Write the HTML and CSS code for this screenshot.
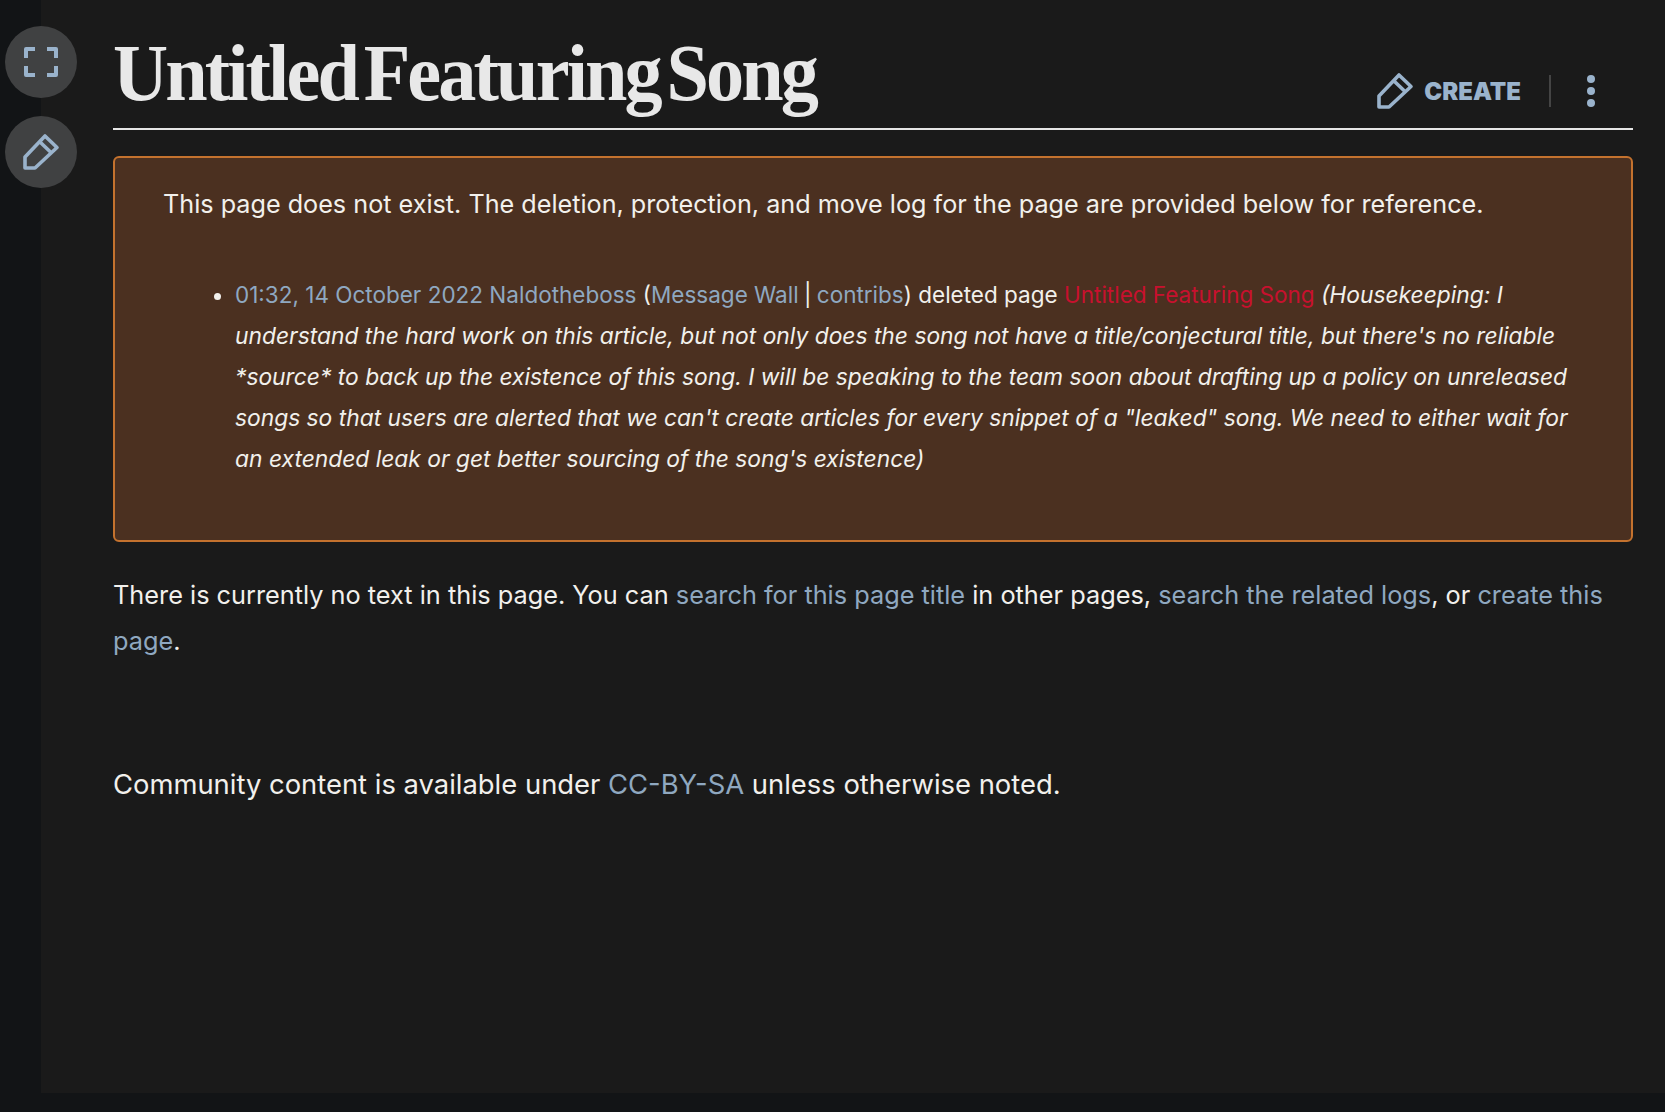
FILE: index.html
```html
<!DOCTYPE html>
<html lang="en">
<head>
    <meta charset="UTF-8" />
    <title>Untitled Featuring Song</title>
    <link rel="stylesheet" href="styles.css">
</head>
<body>

<div class="page">

    <!-- Left rail -->
    <div class="rail">
        <button class="rail-btn" type="button">
            <svg width="34" height="30" viewBox="0 0 34 30" fill="none" stroke="#9ab3cc" stroke-width="4" stroke-linejoin="round">
                <path d="M2 11V2H11M23 2H32V11M32 19V28H23M11 28H2V19"/>
            </svg>
        </button>
        <button class="rail-btn" type="button">
            <svg width="38" height="38" viewBox="0 0 38 38" fill="none" stroke="#9ab3cc" stroke-width="3.6" stroke-linejoin="round">
                <path d="M23 3L35 14.5L13 35H3V24Z M17.5 8.5L29.5 20"/>
            </svg>
        </button>
    </div>

    <!-- Main content -->
    <div class="content">
        <div class="page-header">
            <h1>Untitled Featuring Song</h1>
            <div class="page-actions">
                <a class="create-link" href="#">
                    <svg width="38" height="38" viewBox="0 0 38 38" fill="none" stroke="#9ab3cc" stroke-width="3.6" stroke-linejoin="round">
                        <path d="M23 3L35 14.5L13 35H3V24Z M17.5 8.5L29.5 20"/>
                    </svg>
                    <span>CREATE</span>
                </a>
                <span class="divider"></span>
                <span class="more">
                    <i></i><i></i><i></i>
                </span>
            </div>
        </div>

        <div class="notice">
            <p class="notice-text">This page does not exist. The deletion, protection, and move log for the page are provided below for reference.</p>
            <ul class="log">
                <li><span class="log-head"><a href="#">01:32, 14 October 2022</a> <a href="#">Naldotheboss</a> (<a href="#">Message Wall</a> <span class="sep">|</span> <a href="#">contribs</a>) deleted page <a class="missing" href="#">Untitled Featuring Song</a></span> <em>(Housekeeping: I understand the hard work on this article, but not only does the song not have a title/conjectural title, but there's no reliable *source* to back up the existence of this song. I will be speaking to the team soon about drafting up a policy on unreleased songs so that users are alerted that we can't create articles for every snippet of a "leaked" song. We need to either wait for an extended leak or get better sourcing of the song's existence)</em></li>
            </ul>
        </div>

        <p class="no-text">There is currently no text in this page. You can <a href="#">search for this page title</a> in other pages, <a href="#">search the related logs</a>, or <a href="#">create this page</a>.</p>

        <p class="license">Community content is available under <a href="#">CC-BY-SA</a> unless otherwise noted.</p>
    </div>

</div>

</body>
</html>
```

FILE: styles.css
```css
* {
    box-sizing: border-box;
    margin: 0;
    padding: 0;
}

body {
    background: #121416;
    color: #f2f0ec;
    font-family: 'Inter', sans-serif;
    height: 1112px;
    overflow: hidden;
}

a {
    color: #8fa8c0;
    text-decoration: none;
}

.page {
    display: flex;
    height: 1093px;
    background: #1a1a1a;
    margin-left: 41px;
    position: relative;
}

/* Left rail */
.rail {
    position: absolute;
    left: -36px;
    top: 26px;
    display: flex;
    flex-direction: column;
    gap: 18px;
}

.rail-btn {
    width: 72px;
    height: 72px;
    border: none;
    border-radius: 50%;
    background: #404142;
    display: flex;
    align-items: center;
    justify-content: center;
}

/* Main content */
.content {
    margin-left: 72px;
    width: 1520px;
}

.page-header {
    height: 130px;
    border-bottom: 2px solid #e6e6e6;
    display: flex;
    justify-content: space-between;
}

.page-header h1 {
    font-family: 'Liberation Serif', serif;
    font-weight: 700;
    font-size: 80px;
    line-height: 1;
    letter-spacing: -3px;
    word-spacing: -10px;
    color: #e8e8e8;
    padding-top: 33px;
    transform: scaleX(0.953);
    transform-origin: left center;
}

.page-actions {
    display: flex;
    align-items: center;
    padding-top: 54px;
}

.create-link {
    display: flex;
    align-items: center;
    gap: 10px;
    font-family: 'Inter', sans-serif;
    font-weight: 900;
    font-size: 24px;
    color: #9ab3cc;
}

.divider {
    width: 2px;
    height: 32px;
    background: #444;
    margin-left: 28px;
    margin-right: 36px;
}

.more {
    display: flex;
    flex-direction: column;
    gap: 4px;
    margin-right: 38px;
}

.more i {
    display: block;
    width: 8px;
    height: 8px;
    border-radius: 50%;
    background: #9ab3cc;
}

/* Notice box */
.notice {
    margin-top: 26px;
    height: 386px;
    background: #4b3020;
    border: 2px solid #c4722e;
    border-radius: 6px;
    padding: 27px 48px;
}

.notice-text {
    font-size: 25.2px;
    line-height: 38px;
}

.log {
    margin-top: 51px;
    margin-left: 72px;
    font-size: 22.8px;
    line-height: 41px;
}

.log-head {
    font-size: 22.5px;
}

.sep {
    margin: 0 -1px;
}

.missing {
    color: #c8102e;
}

.no-text {
    margin-top: 30px;
    font-size: 25.3px;
    line-height: 46px;
}

.license {
    margin-top: 97px;
    font-size: 27.4px;
    line-height: 46px;
}
```
